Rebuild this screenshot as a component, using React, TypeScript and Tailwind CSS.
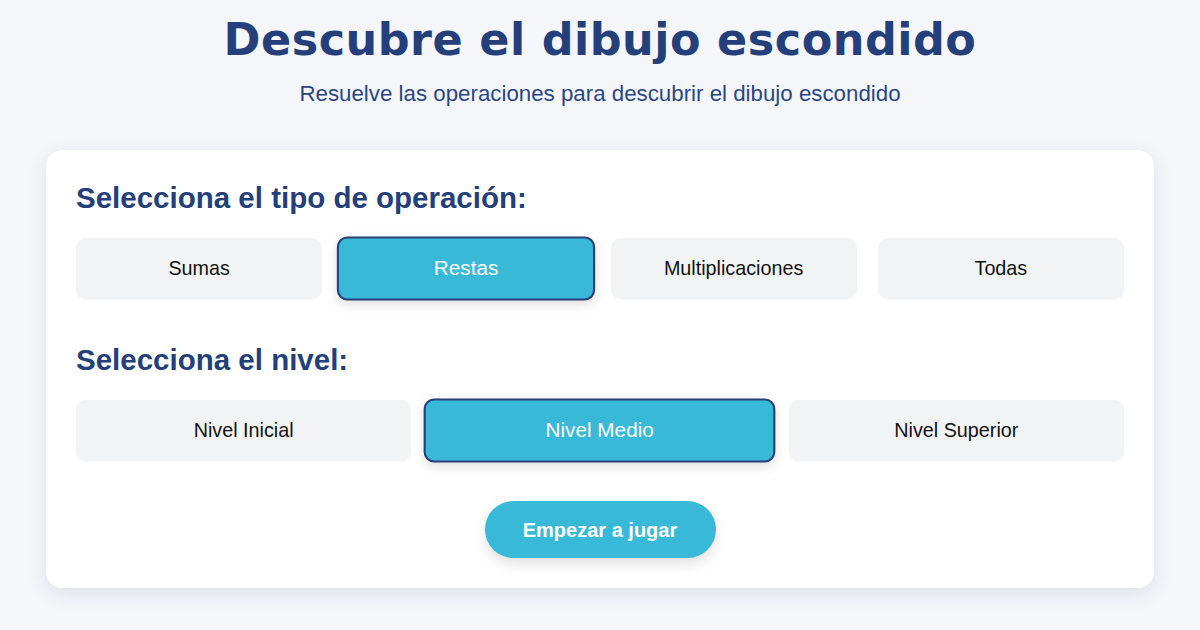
import { useState } from 'react'

const ops = ['Sumas', 'Restas', 'Multiplicaciones', 'Todas']
const levels = ['Nivel Inicial', 'Nivel Medio', 'Nivel Superior']

function Choice({ label, active, onClick }: { label: string; active: boolean; onClick: () => void }) {
  return (
    <button
      onClick={onClick}
      className={`h-[61px] rounded-[10px] text-[19.75px] transition ${
        active
          ? 'bg-[#38b9d7] text-white border-2 border-[#2a3e78] scale-105 shadow-[0_4px_10px_rgba(0,0,0,0.12)]'
          : 'bg-[#f2f3f5] text-[#111] shadow-[0_1px_3px_rgba(0,0,0,0.03)]'
      }`}
    >
      {label}
    </button>
  )
}

export default function App() {
  const [op, setOp] = useState(1)
  const [level, setLevel] = useState(1)

  return (
    <div className="min-h-screen bg-[#f5f6fa] font-['Liberation_Sans',Arial,sans-serif] pt-[14px] px-[46px]">
      <h1 className="text-center text-[44.5px] leading-[52px] font-bold text-[#243f7a] font-['DejaVu_Sans',sans-serif] tracking-[0.5px]">
        Descubre el dibujo escondido
      </h1>
      <p className="text-center text-[22.3px] leading-[28px] text-[#2b4683] mt-[14px]">
        Resuelve las operaciones para descubrir el dibujo escondido
      </p>

      <div className="mt-[42px] bg-white rounded-[16px] shadow-[0_6px_20px_rgba(30,40,80,0.10)] px-[30px] pt-[30px] pb-[30px]">
        <h2 className="text-[29.5px] font-bold text-[#243f7a] leading-[36px]">Selecciona el tipo de operación:</h2>
        <div className="grid grid-cols-4 gap-[21px] mt-[22px]">
          {ops.map((o, i) => (
            <Choice key={o} label={o} active={op === i} onClick={() => setOp(i)} />
          ))}
        </div>

        <h2 className="text-[29.5px] font-bold text-[#243f7a] leading-[36px] mt-[43px]">Selecciona el nivel:</h2>
        <div className="grid grid-cols-3 gap-[21px] mt-[22px]">
          {levels.map((l, i) => (
            <Choice key={l} label={l} active={level === i} onClick={() => setLevel(i)} />
          ))}
        </div>

        <div className="flex justify-center mt-[40px]">
          <button className="w-[231px] h-[57px] rounded-full bg-[#38b9d7] text-white font-bold text-[20px] shadow-[0_6px_14px_rgba(0,0,0,0.12)]">
            Empezar a jugar
          </button>
        </div>
      </div>
    </div>
  )
}
